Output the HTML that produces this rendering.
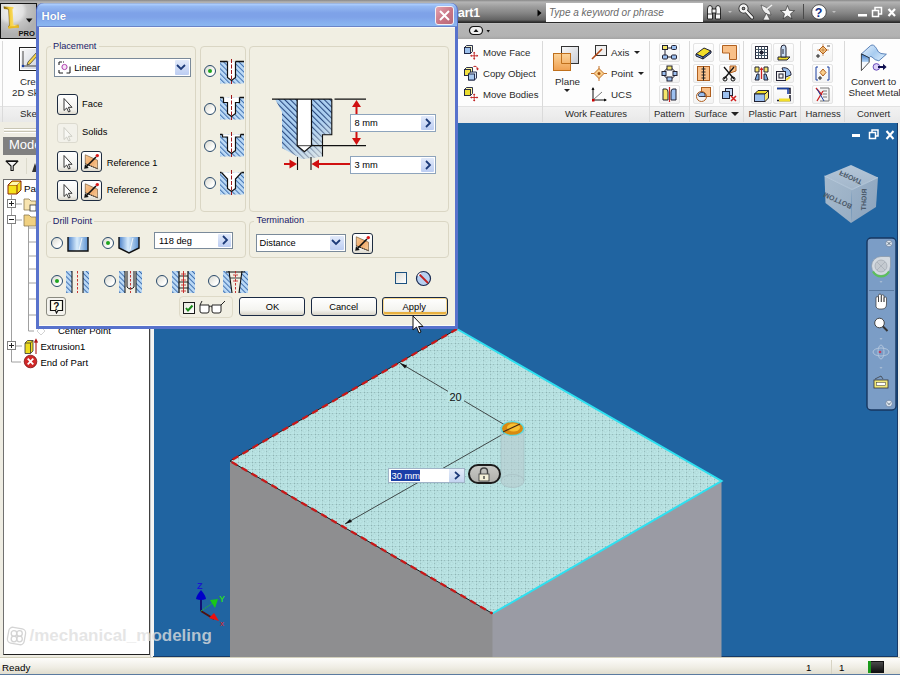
<!DOCTYPE html>
<html><head><meta charset="utf-8"><style>
*{margin:0;padding:0;box-sizing:border-box}
html,body{width:900px;height:675px;overflow:hidden;background:#2064a1;font-family:"Liberation Sans",sans-serif;font-size:11px;color:#000}
.a{position:absolute}
.t{position:absolute;white-space:nowrap;line-height:normal}
.sep{position:absolute;top:41px;width:1px;height:81px;background:#dadada}
.grp{position:absolute;border:1px solid #dad6c4;border-radius:4px}
.gl{position:absolute;background:#f1efe3;white-space:nowrap}
.btn{position:absolute;border:1px solid #1e2c40;border-radius:3px;background:linear-gradient(#ffffff,#f0efea 80%,#dcd8cc)}
.radio{position:absolute;width:12px;height:12px;border:1px solid #2a4a6a;border-radius:50%;background:linear-gradient(135deg,#d8d8d0,#fdfdfb 70%)}
.radio.on::after{content:"";position:absolute;left:3px;top:3px;width:4px;height:4px;border-radius:50%;background:#1fa51f}
.inp{position:absolute;background:#fff;border:1px solid #8a9aaa}
.spin{position:absolute;right:1px;top:1px;bottom:1px;width:13px;background:linear-gradient(#e2eafa,#bccdf2);border-radius:1px}
.pb{position:absolute;height:19px;border:1px solid #1a2a44;border-radius:3px;background:linear-gradient(#fff,#f4f4f0 70%,#d8d4c8)}
</style></head><body>
<div class="a" style="left:0px;top:0px;width:900px;height:23px;background:linear-gradient(#888 0,#a8a8a8 1.5px,#b2b2b2 2.5px,#9c9c9c 7px,#858585 13px,#626262 20px,#3a3a3a 21.5px,#222 23px)"></div>
<div class="a" style="left:0px;top:23px;width:900px;height:16px;background:linear-gradient(#c4c4c4 0,#b6b6b6 1.5px,#b2b2b2 13px,#a4a4a4 16px)"></div>
<div class="a" style="left:0px;top:39px;width:900px;height:67px;background:#fdfdfd"></div>
<div class="a" style="left:0px;top:106px;width:900px;height:17px;background:linear-gradient(#f2f2f2,#e8e8e8);border-top:1px solid #e2e2e2"></div>
<div class="a" style="left:0px;top:3px;width:37px;height:36px;background:#151515"></div>
<div class="a" style="left:1px;top:4px;width:34.5px;height:34px;background:radial-gradient(ellipse 75% 70% at 30% 20%,#f2f2f2 0,#e0e0e0 45%,#c4c4c4 60%,#b0b0b0 100%)"></div>
<svg class="a" style="left:1px;top:4px;" width="35" height="34" viewBox="0 0 35 34"><defs><linearGradient id="gI" x1="0" y1="0" x2="1" y2="0"><stop offset="0" stop-color="#8a6a10"/><stop offset="0.35" stop-color="#f0c830"/><stop offset="0.7" stop-color="#fce070"/><stop offset="1" stop-color="#c89818"/></linearGradient></defs>
<path d="M2.5 2.5 L12.5 3 L12.5 4.5 L11.5 5 L12.5 21 L17.5 20.5 L18 23.5 L7.5 24.5 L7 22.5 L8.5 21.5 L7.5 5.5 L3 5 Z" fill="url(#gI)"/>
<path d="M7 22.5 L7.5 24.5 L18 23.5 L17.5 22 Z" fill="#e8b820"/>
<path d="M3 3 L7.5 5.5 L8.5 21.5 L7 22.5" stroke="#5a4008" stroke-width="0.8" fill="none" opacity="0.6"/>
<path d="M25 14.5 L31.5 14.5 L28.2 18.5 Z" fill="#111"/>
<text x="17.5" y="32" font-family="Liberation Sans" font-weight="bold" font-size="7.6" fill="#111">PRO</text></svg>
<div class="t" style="left:450px;top:5.76px;font-size:12.2px;color:#fff;font-weight:bold;letter-spacing:-0.1px;">Part1</div>
<svg class="a" style="left:536px;top:8px;" width="6" height="10" viewBox="0 0 6 10"><path d="M1.5 1.5 L5.5 5 L1.5 8.5 Z" fill="#000"/></svg>
<div class="a" style="left:546px;top:3px;width:157px;height:19px;background:#fff"></div>
<div class="t" style="left:549px;top:6.79px;font-size:10px;color:#6a6a6a;font-style:italic;">Type a keyword or phrase</div>
<svg class="a" style="left:700px;top:0px;" width="200" height="23" viewBox="0 0 200 23">
 <g fill="#f6f6f6" stroke="#1a1a1a" stroke-width="0.9">
  <path d="M7.5 9 Q7.5 5.5 10 5.5 Q12.5 5.5 12.5 9 V19 H7.5 Z"/><path d="M15.5 9 Q15.5 5.5 18 5.5 Q20.5 5.5 20.5 9 V19 H15.5 Z"/><rect x="12" y="9" width="4" height="4"/>
 </g><path d="M7.5 14 H12.5 M15.5 14 H20.5" stroke="#1a1a1a" stroke-width="0.8"/>
 <path d="M28 11 L32 11 L30 13 Z" fill="#c0c0c0"/>
 <g stroke="#222" stroke-width="4" fill="none" stroke-linecap="round"><circle cx="43.5" cy="8.5" r="3"/><path d="M46 11 L52 17.5"/></g>
 <g stroke="#f4f4f4" stroke-width="2.4" fill="none" stroke-linecap="round"><circle cx="43.5" cy="8.5" r="3"/><path d="M46 11 L52 17.5"/></g>
 <g fill="#f0f0f0" stroke="#222" stroke-width="0.5"><path d="M61 5 Q70 8 71 15 Q63 15 61 5 Z"/><path d="M63 20 L66.5 13 L70 20 Z"/><path d="M67 9 L72 5" stroke="#f0f0f0" stroke-width="1.4"/></g>
 <path d="M87.5 5.5 L89.4 10.4 L94.5 10.6 L90.5 13.8 L91.9 18.8 L87.5 15.9 L83.1 18.8 L84.5 13.8 L80.5 10.6 L85.6 10.4 Z" fill="#f8f8f8" stroke="#222" stroke-width="0.6"/>
 <rect x="103" y="4" width="1" height="15" fill="#4a4a4a"/>
 <circle cx="119" cy="12" r="7.3" fill="#fff" stroke="#222" stroke-width="0.7"/>
 <text x="114.8" y="16.6" font-family="Liberation Sans" font-weight="bold" font-size="12.5" fill="#10308a">?</text>
 <path d="M132 11 L136 11 L134 13 Z" fill="#c0c0c0"/>
 <rect x="158" y="14" width="9" height="2.5" fill="#fff"/>
 <g fill="none" stroke="#fff" stroke-width="1.5"><rect x="172.5" y="10.5" width="6" height="6"/><path d="M175 10 L175 7.5 L181.5 7.5 L181.5 14 L179 14"/></g>
 <path d="M188.5 9 L195 16 M195 9 L188.5 16" stroke="#fff" stroke-width="2.2"/></svg>
<svg class="a" style="left:468px;top:25px;" width="24" height="12" viewBox="0 0 24 12"><rect x="1.5" y="1.5" width="13" height="8" rx="4" fill="#f0f0f0" stroke="#111" stroke-width="1.2"/><path d="M5.5 7 L10.5 7 L8 4 Z" fill="#111"/><path d="M18.5 5 L22 5 L20.2 7.5 Z" fill="#111"/></svg>
<div class="sep" style="left:2px"></div><svg class="a" style="left:19px;top:47px;" width="20" height="24" viewBox="0 0 20 24"><defs><linearGradient id="skg" x1="0" y1="0" x2="1" y2="1"><stop offset="0" stop-color="#f8f8f8"/><stop offset="1" stop-color="#d0d6e0"/></linearGradient></defs><rect x="0.5" y="0.5" width="19" height="23" fill="#fff" stroke="#222"/><rect x="2" y="2" width="16" height="20" fill="url(#skg)"/><path d="M4 4 V19 H17" stroke="#444" fill="none" stroke-width="1"/><circle cx="4" cy="19" r="1.3" fill="#1a3fa0"/><path d="M9 15 L17 6 L19 8 L11 17 L8 18 Z" fill="#f4d24a" stroke="#333" stroke-width="0.7"/></svg>
<div class="t" style="left:20px;top:75.77px;font-size:9.8px;color:#2a2a2a;">Create</div>
<div class="t" style="left:12px;top:86.87px;font-size:9.8px;color:#2a2a2a;">2D Sketch</div>
<div class="t" style="left:20px;top:107.67px;font-size:9.8px;color:#2a2a2a;">Sketch</div>
<svg class="a" style="left:463px;top:44px;" width="18" height="18" viewBox="0 0 18 18"><path d="M1.5 3.5 L3.5 1.5 H9.5 V7.5 L7.5 9.5 H1.5 Z" fill="#f0f0d0" stroke="#1a2040" stroke-width="0.9"/><rect x="1.5" y="3.5" width="6" height="6" fill="#9cc0ec" stroke="#1a2040" stroke-width="0.9"/><path d="M7.699999999999999 11.8 H14.7 M11.2 8.3 V15.3" stroke="#c02020" stroke-width="0.9"/><path d="M7.199999999999999 11.8 l1.5 -1.2 v2.4 Z M15.2 11.8 l-1.5 -1.2 v2.4 Z M11.2 7.800000000000001 l-1.2 1.5 h2.4 Z M11.2 15.8 l-1.2 -1.5 h2.4 Z" fill="#c02020"/></svg>
<div class="t" style="left:483px;top:47.16px;font-size:9.6px;color:#2a2a2a;">Move Face</div>
<svg class="a" style="left:463px;top:65px;" width="18" height="18" viewBox="0 0 18 18"><path d="M1.5 4.5 L3.5 2.5 H9.5 V8.5 L7.5 10.5 H1.5 Z" fill="#fff8a0" stroke="#1a2040" stroke-width="0.9"/><rect x="1.5" y="4.5" width="6" height="6" fill="#f2e040" stroke="#1a2040" stroke-width="0.9"/><path d="M10.5 1.5 Q14 0.5 14.5 4" stroke="#c02020" fill="none" stroke-width="1"/><path d="M13 3.5 L14.5 5.5 L16 3.5 Z" fill="#c02020"/><path d="M5.5 9 L7.5 7 H13.5 V13 L11.5 15 H5.5 Z" fill="#d8e8f8" stroke="#1a2040" stroke-width="0.9"/><rect x="5.5" y="9" width="6" height="6" fill="#a8c8f0" stroke="#1a2040" stroke-width="0.9"/></svg>
<div class="t" style="left:483px;top:68.46px;font-size:9.6px;color:#2a2a2a;">Copy Object</div>
<svg class="a" style="left:463px;top:86px;" width="18" height="18" viewBox="0 0 18 18"><path d="M1.5 3.5 L3.5 1.5 H9.5 V7.5 L7.5 9.5 H1.5 Z" fill="#fff8a0" stroke="#1a2040" stroke-width="0.9"/><rect x="1.5" y="3.5" width="6" height="6" fill="#eadc30" stroke="#1a2040" stroke-width="0.9"/><path d="M7.699999999999999 11.5 H14.7 M11.2 8.0 V15.0" stroke="#c02020" stroke-width="0.9"/><path d="M7.199999999999999 11.5 l1.5 -1.2 v2.4 Z M15.2 11.5 l-1.5 -1.2 v2.4 Z M11.2 7.5 l-1.2 1.5 h2.4 Z M11.2 15.5 l-1.2 -1.5 h2.4 Z" fill="#c02020"/></svg>
<div class="t" style="left:483px;top:89.16px;font-size:9.6px;color:#2a2a2a;">Move Bodies</div>
<div class="sep" style="left:542px"></div><svg class="a" style="left:552px;top:45px;" width="30" height="28" viewBox="0 0 30 28"><defs><linearGradient id="pg1" x1="0" y1="0" x2="1" y2="1"><stop offset="0" stop-color="#fafafa"/><stop offset="1" stop-color="#c8ccd4"/></linearGradient><linearGradient id="pg2" x1="0" y1="0" x2="0" y2="1"><stop offset="0" stop-color="#fcd49a"/><stop offset="1" stop-color="#f0a050"/></linearGradient></defs><rect x="9.5" y="1.5" width="17" height="17" fill="url(#pg1)" stroke="#333"/><rect x="1.5" y="8.5" width="17" height="17" fill="url(#pg2)" stroke="#c0701c"/><path d="M9.5 8.5 V18.5 H18.5" stroke="#c0701c" fill="none"/></svg>
<div class="t" style="left:555px;top:76.27px;font-size:9.8px;color:#2a2a2a;">Plane</div>
<svg class="a" style="left:564px;top:89px;" width="6" height="4" viewBox="0 0 6 4"><path d="M0 0 L6 0 L3 3 Z" fill="#222"/></svg>
<svg class="a" style="left:591px;top:45px;" width="17" height="15" viewBox="0 0 17 15"><rect x="4.5" y="0.5" width="11" height="10" fill="#f0f0f0" stroke="#333"/><path d="M1 14 L11 4" stroke="#b04818" stroke-width="1.6"/></svg>
<div class="t" style="left:611px;top:46.97px;font-size:9.8px;color:#2a2a2a;">Axis</div>
<svg class="a" style="left:634px;top:51px;" width="6" height="4" viewBox="0 0 6 4"><path d="M0 0 L6 0 L3 3 Z" fill="#222"/></svg>
<svg class="a" style="left:591px;top:66px;" width="17" height="15" viewBox="0 0 17 15"><path d="M8 0 V15 M0 7.5 H16" stroke="#c07028" stroke-width="1"/><path d="M8 2.5 L13 7.5 L8 12.5 L3 7.5 Z" fill="#fbd08c" stroke="#c07028"/><circle cx="8" cy="7.5" r="1.5" fill="#a05010"/></svg>
<div class="t" style="left:611px;top:67.67px;font-size:9.8px;color:#2a2a2a;">Point</div>
<svg class="a" style="left:638px;top:72px;" width="6" height="4" viewBox="0 0 6 4"><path d="M0 0 L6 0 L3 3 Z" fill="#222"/></svg>
<svg class="a" style="left:591px;top:87px;" width="17" height="15" viewBox="0 0 17 15"><path d="M2 1 V13 H15" stroke="#111" stroke-width="1" fill="none"/><path d="M2 13 L11 5" stroke="#555" stroke-width="0.8"/><path d="M0.5 3 L2 0 L3.5 3 Z M13 11.5 L16 13 L13 14.5 Z" fill="#111"/><rect x="1" y="12" width="2.5" height="2.5" fill="#c00"/></svg>
<div class="t" style="left:611px;top:88.97px;font-size:9.8px;color:#2a2a2a;">UCS</div>
<div class="t" style="left:565px;top:107.95px;font-size:9.5px;color:#2a2a2a;">Work Features</div>
<div class="sep" style="left:649px"></div><div class="a" style="left:659px;top:43px;width:21px;height:19px;border:1px solid #e4e4e4;border-radius:2px;background:linear-gradient(#fefefe,#f3f3f3)"></div>
<svg class="a" style="left:661px;top:44px;" width="17" height="17" viewBox="0 0 17 17"><path d="M4 4 H13 M4 4 V13 H13" stroke="#223" fill="none"/><rect x="1.5" y="1.5" width="5" height="4" fill="#f5e66a" stroke="#223"/><rect x="10.5" y="1.5" width="5" height="4" rx="1" fill="#9cc0f0" stroke="#223"/><rect x="1.5" y="11" width="5" height="4" rx="1" fill="#9cc0f0" stroke="#223"/><rect x="10.5" y="11" width="5" height="4" rx="1" fill="#9cc0f0" stroke="#223"/></svg>
<div class="a" style="left:659px;top:64px;width:21px;height:19px;border:1px solid #e4e4e4;border-radius:2px;background:linear-gradient(#fefefe,#f3f3f3)"></div>
<svg class="a" style="left:661px;top:65px;" width="17" height="17" viewBox="0 0 17 17"><circle cx="8.5" cy="8.5" r="5.5" fill="none" stroke="#223"/><rect x="6" y="1" width="5" height="4" fill="#f5e66a" stroke="#223"/><rect x="1" y="6.5" width="4" height="4" fill="#9cc0f0" stroke="#223"/><rect x="12" y="6.5" width="4" height="4" fill="#9cc0f0" stroke="#223"/><rect x="6" y="12" width="5" height="4" fill="#9cc0f0" stroke="#223"/></svg>
<div class="a" style="left:659px;top:85px;width:21px;height:19px;border:1px solid #e4e4e4;border-radius:2px;background:linear-gradient(#fefefe,#f3f3f3)"></div>
<svg class="a" style="left:661px;top:86px;" width="17" height="17" viewBox="0 0 17 17"><path d="M2 3 H5 Q7 3 7 6 V14 H2 Z" fill="#f5e66a" stroke="#223"/><path d="M15 3 H12 Q10 3 10 6 V14 H15 Z" fill="#9cc0f0" stroke="#223"/><path d="M8.5 1 V16" stroke="#c22" stroke-width="1.2"/></svg>
<div class="sep" style="left:689px"></div><div class="a" style="left:693px;top:43px;width:21px;height:19px;border:1px solid #e4e4e4;border-radius:2px;background:linear-gradient(#fefefe,#f3f3f3)"></div>
<svg class="a" style="left:695px;top:44px;" width="17" height="17" viewBox="0 0 17 17"><path d="M1 10 L9 4 L16 7 L8 13 Z" fill="#f2de2a" stroke="#223"/><path d="M1 10 V12 L8 15 V13 Z" fill="#7aa8e0" stroke="#223"/><path d="M8 13 V15 L16 9 V7 Z" fill="#4f7fc0" stroke="#223"/></svg>
<div class="a" style="left:719px;top:43px;width:21px;height:19px;border:1px solid #e4e4e4;border-radius:2px;background:linear-gradient(#fefefe,#f3f3f3)"></div>
<svg class="a" style="left:721px;top:44px;" width="17" height="17" viewBox="0 0 17 17"><path d="M1.5 1.5 H15.5 V15.5 H8.5 V9 H1.5 Z" fill="#f9c088" stroke="#b06020"/></svg>
<div class="a" style="left:693px;top:64px;width:21px;height:19px;border:1px solid #e4e4e4;border-radius:2px;background:linear-gradient(#fefefe,#f3f3f3)"></div>
<svg class="a" style="left:695px;top:65px;" width="17" height="17" viewBox="0 0 17 17"><rect x="2.5" y="1.5" width="12" height="14" fill="#f9c088" stroke="#b06020"/><path d="M8.5 1.5 V15.5 M6.5 4 H10.5 M6.5 7 H10.5 M6.5 10 H10.5 M6.5 13 H10.5" stroke="#222"/></svg>
<div class="a" style="left:719px;top:64px;width:21px;height:19px;border:1px solid #e4e4e4;border-radius:2px;background:linear-gradient(#fefefe,#f3f3f3)"></div>
<svg class="a" style="left:721px;top:65px;" width="17" height="17" viewBox="0 0 17 17"><path d="M9 1 H15 V6 L9 8 Z" fill="#f9c088" stroke="#b06020"/><path d="M3 2 L13 14 M13 2 L3 14" stroke="#111" stroke-width="1.3"/><circle cx="4" cy="14" r="2" fill="none" stroke="#111"/><circle cx="12" cy="14" r="2" fill="none" stroke="#111"/></svg>
<div class="a" style="left:693px;top:85px;width:21px;height:19px;border:1px solid #e4e4e4;border-radius:2px;background:linear-gradient(#fefefe,#f3f3f3)"></div>
<svg class="a" style="left:695px;top:86px;" width="17" height="17" viewBox="0 0 17 17"><rect x="6.5" y="1.5" width="9" height="9" fill="#f9c088" stroke="#b06020"/><circle cx="6.5" cy="10.5" r="5" fill="none" stroke="#b06020"/><path d="M3 9 A4 4 0 0 1 10 8 V10.5 H4 Z" fill="#9cc0f0" stroke="#223" stroke-width="0.8"/></svg>
<div class="a" style="left:719px;top:85px;width:21px;height:19px;border:1px solid #e4e4e4;border-radius:2px;background:linear-gradient(#fefefe,#f3f3f3)"></div>
<svg class="a" style="left:721px;top:86px;" width="17" height="17" viewBox="0 0 17 17"><rect x="4.5" y="2.5" width="7" height="7" fill="#c8dcf4" stroke="#223"/><rect x="1.5" y="5.5" width="7" height="7" fill="#9cc0f0" stroke="#223"/><path d="M10 10 L15 15 M15 10 L10 15" stroke="#d02020" stroke-width="1.5"/></svg>
<div class="sep" style="left:743px"></div><div class="a" style="left:751px;top:43px;width:21px;height:19px;border:1px solid #e4e4e4;border-radius:2px;background:linear-gradient(#fefefe,#f3f3f3)"></div>
<svg class="a" style="left:753px;top:44px;" width="17" height="17" viewBox="0 0 17 17"><rect x="2.5" y="2.5" width="12" height="12" fill="#fff" stroke="#223"/><path d="M5.5 2.5 V14.5 M8.5 2.5 V14.5 M11.5 2.5 V14.5 M2.5 5.5 H14.5 M2.5 8.5 H14.5 M2.5 11.5 H14.5" stroke="#456"/><circle cx="8.5" cy="8.5" r="2" fill="#223"/></svg>
<div class="a" style="left:773px;top:43px;width:21px;height:19px;border:1px solid #e4e4e4;border-radius:2px;background:linear-gradient(#fefefe,#f3f3f3)"></div>
<svg class="a" style="left:775px;top:44px;" width="17" height="17" viewBox="0 0 17 17"><path d="M3 13 H15 L12 16 H3 Z" fill="#f2de2a" stroke="#223"/><path d="M6 13 V4 Q6 1 9 1 Q11 1 11 4 V13 Z" fill="#c8dcf4" stroke="#223"/><path d="M8 5 V10" stroke="#223"/></svg>
<div class="a" style="left:751px;top:64px;width:21px;height:19px;border:1px solid #e4e4e4;border-radius:2px;background:linear-gradient(#fefefe,#f3f3f3)"></div>
<svg class="a" style="left:753px;top:65px;" width="17" height="17" viewBox="0 0 17 17"><path d="M2 2 H6 V7 H2 Z M11 2 H15 V7 H11 Z" fill="#f5e66a" stroke="#223"/><path d="M2 15 L4 9 H6 V15 Z M11 15 V9 H13 L15 15 Z" fill="#7aa8e0" stroke="#223"/><path d="M8.5 3 V14" stroke="#c22" stroke-width="1.3"/><path d="M6.5 5 L8.5 2 L10.5 5" fill="#c22"/></svg>
<div class="a" style="left:773px;top:64px;width:21px;height:19px;border:1px solid #e4e4e4;border-radius:2px;background:linear-gradient(#fefefe,#f3f3f3)"></div>
<svg class="a" style="left:775px;top:65px;" width="17" height="17" viewBox="0 0 17 17"><path d="M7 3 A7 7 0 0 1 16 10 L11 12 Z" fill="#9cc0f0" stroke="#223"/><rect x="1.5" y="6.5" width="9" height="9" fill="#f4f4f4" stroke="#223"/><rect x="4" y="9" width="4" height="4" fill="none" stroke="#223"/><path d="M11 15 L15 12" stroke="#f2de2a" stroke-width="2"/></svg>
<div class="a" style="left:751px;top:85px;width:21px;height:19px;border:1px solid #e4e4e4;border-radius:2px;background:linear-gradient(#fefefe,#f3f3f3)"></div>
<svg class="a" style="left:753px;top:86px;" width="17" height="17" viewBox="0 0 17 17"><path d="M1.5 8 L5 4.5 H15.5 L12 8 Z" fill="#f2de2a" stroke="#223"/><rect x="1.5" y="8" width="10.5" height="7.5" fill="#9cc0f0" stroke="#223"/><path d="M12 8 L15.5 4.5 V12 L12 15.5" fill="#f5e66a" stroke="#223"/></svg>
<div class="a" style="left:773px;top:85px;width:21px;height:19px;border:1px solid #e4e4e4;border-radius:2px;background:linear-gradient(#fefefe,#f3f3f3)"></div>
<svg class="a" style="left:775px;top:86px;" width="17" height="17" viewBox="0 0 17 17"><path d="M2 2.5 H15 V8 M2 14.5 H15 V9" stroke="#223" stroke-width="1.6" fill="none"/><rect x="4" y="12.5" width="11" height="3" fill="#f2de2a"/><path d="M2 2.5 H13 V8" stroke="#1a3fa0" stroke-width="1.6" fill="none"/></svg>
<div class="sep" style="left:800px"></div><div class="a" style="left:812px;top:43px;width:21px;height:19px;border:1px solid #e4e4e4;border-radius:2px;background:linear-gradient(#fefefe,#f3f3f3)"></div>
<svg class="a" style="left:814px;top:44px;" width="17" height="17" viewBox="0 0 17 17"><path d="M9 2 L13 6 L9 10 L5 6 Z" fill="#fbd08c" stroke="#b06020"/><path d="M9 0 V12 M3 6 H15" stroke="#b06020" stroke-width="0.6"/><path d="M2 12 H6 M4 10 V14" stroke="#222"/><path d="M13 2 H16" stroke="#222" stroke-width="0.8"/></svg>
<div class="a" style="left:812px;top:64px;width:21px;height:19px;border:1px solid #e4e4e4;border-radius:2px;background:linear-gradient(#fefefe,#f3f3f3)"></div>
<svg class="a" style="left:814px;top:65px;" width="17" height="17" viewBox="0 0 17 17"><path d="M4 2 H2 V15 H4 M13 2 H15 V15 H13" stroke="#1a3fa0" fill="none"/><path d="M9 4 L12 7.5 L9 11 L6 7.5 Z" fill="#fbd08c" stroke="#b06020"/><path d="M4 13 H8 M6 11 V15" stroke="#222"/></svg>
<div class="a" style="left:812px;top:85px;width:21px;height:19px;border:1px solid #e4e4e4;border-radius:2px;background:linear-gradient(#fefefe,#f3f3f3)"></div>
<svg class="a" style="left:814px;top:86px;" width="17" height="17" viewBox="0 0 17 17"><path d="M6 2 H15 V15 H6" fill="#f4f4f4" stroke="#777"/><path d="M9 5 H13 M9 8 H13 M9 11 H13" stroke="#777"/><path d="M2 2 L8 9 M9 5 L3 15" stroke="#c22" stroke-width="1.3"/><path d="M3 3 L10 15" stroke="#1a3fa0" stroke-width="1"/></svg>
<div class="sep" style="left:844px"></div><svg class="a" style="left:858px;top:44px;" width="32" height="28" viewBox="0 0 32 28"><defs><linearGradient id="cvg" x1="0" y1="0" x2="1" y2="0.6"><stop offset="0" stop-color="#eef6fe"/><stop offset="0.6" stop-color="#a8ccf0"/><stop offset="1" stop-color="#d0e6fa"/></linearGradient><linearGradient id="cvf" x1="0" y1="0" x2="0" y2="1"><stop offset="0" stop-color="#3a78c8"/><stop offset="0.45" stop-color="#a8ccf0"/><stop offset="0.5" stop-color="#f4f8fc"/><stop offset="1" stop-color="#ffffff"/></linearGradient></defs><path d="M3.4 9.9 L12.6 1.6 Q15.5 -0.5 18.5 4.5 Q20 8.8 23 9.5 L28.4 10.2 L20.9 16.8 Q17 16.5 14 13 Q12.5 11.5 11.2 13.8 Z" fill="url(#cvg)" stroke="#3a68a8" stroke-width="0.8"/><path d="M3.4 9.9 L11.2 13.8 L11.2 18.2 L3.4 26.6 Z" fill="url(#cvf)" stroke="#222" stroke-width="0.8"/><circle cx="18.4" cy="22.9" r="3.3" fill="#dcd0f8" stroke="#5a3ab0" stroke-width="0.9"/><path d="M20 23 H26" stroke="#101050" stroke-width="2"/><path d="M25 19.8 L28.6 23 L25 26.2 Z" fill="#101050"/></svg>
<div class="t" style="left:851px;top:75.87px;font-size:9.8px;color:#2a2a2a;">Convert to</div>
<div class="t" style="left:848.5px;top:87.37px;font-size:9.8px;color:#2a2a2a;">Sheet Metal</div>
<div class="t" style="left:654px;top:107.95px;font-size:9.5px;color:#2a2a2a;">Pattern</div>
<div class="t" style="left:694.5px;top:107.95px;font-size:9.5px;color:#2a2a2a;">Surface</div>
<svg class="a" style="left:731px;top:112px;" width="8" height="5" viewBox="0 0 8 5"><path d="M0 0 L8 0 L4 4 Z" fill="#222"/></svg>
<div class="t" style="left:748.5px;top:107.95px;font-size:9.5px;color:#2a2a2a;">Plastic Part</div>
<div class="t" style="left:805.5px;top:107.95px;font-size:9.5px;color:#2a2a2a;">Harness</div>
<div class="t" style="left:857px;top:107.95px;font-size:9.5px;color:#2a2a2a;">Convert</div>
<div class="a" style="left:0px;top:122px;width:153px;height:535px;background:#efede3"></div>
<div class="a" style="left:154px;top:123px;width:744px;height:534px;background:#2064a1"></div>
<div class="a" style="left:150px;top:122px;width:4px;height:535px;background:#f4f4f2;border-left:1px solid #c8c8c8"></div>
<div class="a" style="left:898px;top:123px;width:2px;height:534px;background:#f2f2ee"></div>
<div class="a" style="left:897px;top:123px;width:1px;height:534px;background:#163a68"></div>
<div class="a" style="left:153px;top:656px;width:745px;height:1px;background:#163a68"></div>
<div class="a" style="left:3px;top:179px;width:147px;height:476px;background:#fff;border:1px solid #707070;border-right-color:#404040;border-bottom-color:#202020"></div>
<div class="a" style="left:4px;top:128px;width:145px;height:1px;background:#c8c5b4"></div>
<div class="a" style="left:4px;top:129px;width:145px;height:1px;background:#fff"></div>
<div class="a" style="left:4px;top:131px;width:145px;height:1px;background:#c8c5b4"></div>
<div class="a" style="left:4px;top:132px;width:145px;height:1px;background:#fff"></div>
<div class="a" style="left:3px;top:137px;width:80px;height:18px;background:#808080"></div>
<div class="t" style="left:9px;top:137.33px;font-size:13px;color:#fff;">Model</div>
<svg class="a" style="left:5px;top:160px;" width="14" height="12" viewBox="0 0 14 12"><path d="M1 1.2 H13 L8.2 6 V10.5 L6 10.5 V6 Z" fill="#f4f4f4" stroke="#111" stroke-width="1.1" stroke-linejoin="round"/><path d="M1 1.2 H13" stroke="#111" stroke-width="1.6"/></svg>
<div class="a" style="left:26px;top:158px;width:1px;height:16px;background:#dcdacc"></div>
<svg class="a" style="left:31px;top:160px;" width="8" height="13" viewBox="0 0 8 13"><path d="M1 12 L4 3 L7 12 Z" fill="#333"/></svg>
<svg class="a" style="left:4px;top:180px;" width="145" height="190" viewBox="0 0 145 190">
 <g stroke="#a0a0a0" stroke-width="1" fill="none">
  <path d="M7.5 15 V182 H17"/>
  <path d="M11 24 H18 M11 40 H18 M11 166 H18"/>
  <path d="M24.5 45 V151 H30"/>
  <path d="M24.5 48 H32 M24.5 62 H32 M24.5 76 H32 M24.5 89 H32 M24.5 103 H32 M24.5 119 H32 M24.5 135 H32"/>
 </g>
 <g fill="#fff" stroke="#808080"><rect x="3.5" y="19.5" width="8" height="8"/><rect x="3.5" y="35.5" width="8" height="8"/><rect x="3.5" y="161.5" width="8" height="8"/></g>
 <path d="M5 23.5 H10 M7.5 21 V26 M5 39.5 H10 M5 165.5 H10 M7.5 163 V168" stroke="#222"/>
 <path d="M4 5 L8 1 L17 1 L17 10 L13 14 L4 14 Z" fill="#f6e21a" stroke="#8a2a0a" stroke-width="1"/>
 <path d="M4 5 H13 V14 M13 5 L17 1" stroke="#8a2a0a" fill="none" stroke-width="1"/>
 <path d="M5 5 L8.5 2 H16 L13 5 Z" fill="#fff8b0"/>
 <path d="M20 19 H25 L27 21 H32 V30 H20 Z" fill="#f8e4b0" stroke="#8a7a50" stroke-width="0.8"/>
 <rect x="26" y="25" width="6" height="6" fill="#fff" stroke="#333" stroke-width="0.8"/>
 <path d="M20 35 H25 L27 37 H32 V46 H20 Z" fill="#f0d080" stroke="#8a7a50" stroke-width="0.8"/>
 <path d="M21 163 L23.5 160.5 H29 V171 L26.5 173.5 H21 Z" fill="#eedc20" stroke="#333" stroke-width="0.8"/>
 <path d="M21 163 H26.5 V173.5 M26.5 163 L29 160.5" stroke="#333" fill="none" stroke-width="0.8"/>
 <path d="M32 174 V160 M30.5 162.5 L32 159.5 L33.5 162.5" stroke="#b01818" stroke-width="1.1" fill="#b01818"/>
 <circle cx="26.5" cy="181.5" r="6.3" fill="#d02828" stroke="#801010" stroke-width="0.8"/>
 <path d="M23.7 178.7 L29.3 184.3 M29.3 178.7 L23.7 184.3" stroke="#fff" stroke-width="1.8"/>
 <path d="M37 147 L41 151 L37 155 L33 151 Z" fill="none" stroke="#c8c8c8" stroke-width="0.8"/></svg>
<div class="t" style="left:24px;top:182.97px;font-size:9.8px;color:#000;">Part1</div>
<div class="t" style="left:58px;top:325.45px;font-size:9.5px;color:#000;">Center Point</div>
<div class="t" style="left:40.5px;top:341.25px;font-size:9.5px;color:#000;">Extrusion1</div>
<div class="t" style="left:40.5px;top:356.55px;font-size:9.5px;color:#000;">End of Part</div>
<div class="a" style="left:0px;top:657px;width:900px;height:18px;background:linear-gradient(#fdfdfb,#efede4 55%,#dedbcb);border-top:1px solid #d4d1bd"></div>
<div class="a" style="left:0px;top:674px;width:900px;height:1px;background:#5a7aa0"></div>
<div class="t" style="left:2px;top:661.67px;font-size:9.8px;color:#000;">Ready</div>
<div class="t" style="left:806px;top:661.67px;font-size:9.8px;color:#000;">1</div>
<div class="a" style="left:831px;top:660px;width:1px;height:14px;background:#d8d4c4"></div>
<div class="t" style="left:839px;top:661.67px;font-size:9.8px;color:#000;">1</div>
<div class="a" style="left:868px;top:661px;width:16px;height:12px;background:linear-gradient(#4a4a4a,#111);border:1px solid #111"></div>
<div class="a" style="left:868px;top:661px;width:3px;height:12px;background:#1a9a1a"></div>
<svg class="a" style="left:153px;top:123px;" width="745" height="534" viewBox="153 123 745 534">
 <defs>
  <pattern id="dots" patternUnits="userSpaceOnUse" width="7" height="7" x="0" y="0">
   <rect width="7" height="7" fill="#bbe5e5"/>
   <rect x="0" y="0" width="1" height="1" fill="#8cb4b4"/><rect x="0" y="3" width="1" height="1" fill="#94bcbc"/><rect x="3" y="0" width="1" height="1" fill="#94bcbc"/>
   <rect x="0" y="1" width="1" height="2" fill="#b0d8d8"/><rect x="0" y="4" width="1" height="3" fill="#b0d8d8"/><rect x="1" y="0" width="2" height="1" fill="#b0d8d8"/><rect x="4" y="0" width="3" height="1" fill="#b0d8d8"/>
   <circle cx="3.5" cy="3.5" r="1.8" fill="none" stroke="#acd6d6" stroke-width="0.8"/>
  </pattern>
 </defs>
 <polygon points="230,461 494,614.4 494,657 230,657" fill="#8e8e90"/>
 <polygon points="492.5,613.5 721.5,481 721.5,657 492.5,657" fill="#9a9ba4"/>
 <polygon points="457,329 721.5,481 492.5,613.5 230,461" fill="url(#dots)"/>
 <path d="M457 329 L721.5 481 L492.5 613.5" stroke="#2ee0f0" stroke-width="2" fill="none"/>
 <path d="M457 329 L230 461 L492.5 613.5" stroke="#1a1a1a" stroke-width="1" fill="none"/>
 <path d="M457 329 L230 461 L492.5 613.5" stroke="#c81818" stroke-width="2.3" fill="none" stroke-dasharray="6.5 5"/>
 <path d="M400 363 L505 425" stroke="#222" stroke-width="0.8"/>
 <path d="M400 363 L407 365.5 L405 368.5 Z" fill="#111"/>
 <rect x="448" y="390" width="16" height="12" fill="#b8e4e4"/>
 <text x="449.5" y="401" font-family="Liberation Sans" font-size="11" fill="#111">20</text>
 <path d="M345 524 L505 433" stroke="#222" stroke-width="0.8"/>
 <path d="M345 524 L350 519 L352 522 Z" fill="#111"/>
 <path d="M501 428 V481 A11.5 6.5 0 0 0 524 481 V428 Z" fill="#b8cccf" fill-opacity="0.6"/>
 <ellipse cx="512.5" cy="481" rx="11.5" ry="6.5" fill="none" stroke="#a8c0c4" stroke-width="0.8"/>
 <path d="M501 428 V481 M524 428 V481" stroke="#9fb8bc" stroke-width="0.6"/>
 <ellipse cx="512.5" cy="428.5" rx="12" ry="7.5" fill="#48d8e0" opacity="0.8"/>
 <ellipse cx="512.5" cy="428.5" rx="10.5" ry="6.3" fill="#d88a10"/>
 <ellipse cx="513.5" cy="427.5" rx="6.5" ry="4" fill="#f8c030"/>
 <path d="M503 432 L520 424" stroke="#4a2a10" stroke-width="1.2"/>
 <path d="M201 611 V595" stroke="#101070" stroke-width="2"/>
 <path d="M201 611 L214 619" stroke="#501010" stroke-width="2"/>
 <path d="M201 611 L213 603" stroke="#20c020" stroke-width="1" stroke-dasharray="1.5 1"/>
 <path d="M196 599 Q196 596 201 590 Q206 596 206 599 Q201 601 196 599 Z" fill="#0000c8"/>
 <text x="197" y="589" font-family="Liberation Sans" font-weight="bold" font-size="9" fill="#1818d0">Z</text>
 <path d="M210 600 L218 599 L215 608 Z" fill="#18c818"/>
 <text x="219" y="602" font-family="Liberation Sans" font-weight="bold" font-size="9" fill="#28d828">Y</text>
 <path d="M209 618 L214 613 L219 621 Z" fill="#e81010"/>
 <text x="220" y="626" font-family="Liberation Sans" font-size="8" fill="#e02020">x</text>
 <defs><linearGradient id="cubeT" x1="0" y1="0" x2="0" y2="1"><stop offset="0" stop-color="#b4c6d8"/><stop offset="1" stop-color="#a2b6ca"/></linearGradient><linearGradient id="cubeL" x1="0" y1="0" x2="1" y2="1"><stop offset="0" stop-color="#a6bacd"/><stop offset="1" stop-color="#98aec4"/></linearGradient><linearGradient id="cubeR" x1="0" y1="0" x2="1" y2="1"><stop offset="0" stop-color="#9cb2c8"/><stop offset="1" stop-color="#8aa2bc"/></linearGradient></defs>
 <path d="M851 165 L878 177.5 L852 189.5 L824.5 176 Z" fill="url(#cubeT)"/>
 <path d="M824.5 176 L852 189.5 L851 223 L825.5 203 Z" fill="url(#cubeL)"/>
 <path d="M852 189.5 L878 177.5 L876 207 L851 223 Z" fill="url(#cubeR)"/>
 <path d="M824.5 176 L852 189.5 L878 177.5" stroke="#c4d2e0" stroke-width="0.8" fill="none"/>
 <text transform="translate(851,177) rotate(25) scale(1,-1)" text-anchor="middle" dominant-baseline="middle" font-family="Liberation Sans" font-size="7" fill="#4a5868" font-weight="bold">FRONT</text>
 <text transform="translate(838,200) rotate(205)" text-anchor="middle" dominant-baseline="middle" font-family="Liberation Sans" font-size="7" fill="#4a5868" font-weight="bold">BOTTOM</text>
 <text transform="translate(864.5,199.5) rotate(92) scale(1,-1)" text-anchor="middle" dominant-baseline="middle" font-family="Liberation Sans" font-size="7" fill="#4a5868" font-weight="bold">RIGHT</text>
 <rect x="852" y="134" width="8" height="3" fill="#fff"/>
 <rect x="869.5" y="132.5" width="6" height="6" fill="none" stroke="#fff" stroke-width="1.5"/>
 <path d="M872 132 V130 H878 V136 H876" fill="none" stroke="#fff" stroke-width="1.5"/>
 <path d="M886.5 131 L893.5 139 M893.5 131 L886.5 139" stroke="#fff" stroke-width="2"/>
 <rect x="867" y="238" width="29" height="172" rx="4" fill="#7b9dc6" stroke="#163660" stroke-width="1.4"/>
 <circle cx="889" cy="243.5" r="3.3" fill="#dde6f0" stroke="#5a7090" stroke-width="0.6"/>
 <path d="M887.3 241.8 L890.7 245.2 M890.7 241.8 L887.3 245.2" stroke="#456" stroke-width="0.8"/>
 <path d="M881 256.5 H889 Q890.5 256.5 890.5 258 V266 A9.5 9.5 0 1 1 881 256.5 Z" fill="#d4dae0" stroke="#8a9aac" stroke-width="0.8"/>
 <circle cx="881" cy="266" r="6" fill="#c4cad0" stroke="#a0a8b0" stroke-width="0.7"/>
 <path d="M877 262 L885 270 M885 262 L877 270" stroke="#a8b0b8" stroke-width="0.8"/>
 <path d="M873 271.5 A9 9 0 0 0 889 271.5" stroke="#5cc05c" stroke-width="2.2" fill="none"/>
 <path d="M879.5 281 L882.5 281 L881 283 Z" fill="#a8bcd4"/>
 <path d="M869 290.5 H894" stroke="#5a7aa0" stroke-width="1"/>
 <path d="M876 307 V298 Q876 296.5 877.3 296.5 Q878.5 296.5 878.5 298 V302 V295.5 Q878.5 294 880 294 Q881.3 294 881.3 295.5 V302 V296 Q881.3 294.8 882.6 294.8 Q884 294.8 884 296 V302 V298 Q884 297 885.2 297 Q886.5 297 886.5 298 V304 Q886.5 309 882 309 H879 Q877.5 309 876 307 Z" fill="#fff" stroke="#333" stroke-width="0.7"/>
 <circle cx="879.5" cy="323" r="4.8" fill="#fff" stroke="#333" stroke-width="0.9"/>
 <path d="M883 326.5 L887.5 331" stroke="#333" stroke-width="2"/>
 <path d="M879.5 338 L882.5 338 L881 340 Z" fill="#a8bcd4"/>
 <ellipse cx="881" cy="352" rx="8" ry="4" fill="none" stroke="#b0c4dc" stroke-width="1"/>
 <ellipse cx="881" cy="352" rx="3" ry="7" fill="none" stroke="#b0c4dc" stroke-width="1"/>
 <circle cx="880" cy="352" r="1.3" fill="#c04060"/>
 <path d="M879.5 367 L882.5 367 L881 369 Z" fill="#a8bcd4"/>
 <path d="M875 379 L881 376 L883 379" stroke="#333" stroke-width="0.7" fill="none"/>
 <rect x="874" y="380" width="14" height="8" fill="#f0e878" stroke="#333" stroke-width="0.8"/>
 <rect x="876.5" y="382.5" width="9" height="3" fill="#fff" stroke="#333" stroke-width="0.5"/>
 <circle cx="889" cy="403.5" r="3.3" fill="#dde6f0" stroke="#5a7090" stroke-width="0.6"/>
 <path d="M887.3 402.5 L889 404.7 L890.7 402.5" stroke="#456" stroke-width="0.8" fill="none"/></svg>
<div class="a" style="left:388px;top:468px;width:77px;height:15px;background:#fff;border:1px solid #a0b4c8"></div>
<div class="a" style="left:449px;top:469px;width:15px;height:13px;background:linear-gradient(#e4ecfa,#c4d4f0)"></div>
<svg class="a" style="left:452px;top:470px;" width="10" height="11" viewBox="0 0 10 11"><path d="M3 2 L7 5.5 L3 9" stroke="#1c3a78" stroke-width="1.7" fill="none"/></svg>
<div class="a" style="left:391px;top:470px;width:29px;height:11px;background:#1a3fa8"></div>
<div class="t" style="left:391.5px;top:470.93px;font-size:9.3px;color:#fff;">30 mm</div>
<div class="a" style="left:468px;top:464px;width:33px;height:20px;border:2px solid #1c1c1c;border-radius:10px;background:linear-gradient(#c8c8c4,#b0b0ac)"></div>
<svg class="a" style="left:477px;top:467px;" width="14" height="15" viewBox="0 0 14 15"><path d="M3.5 7 V4.5 Q3.5 1 7 1 Q10.5 1 10.5 4.5 V7" stroke="#444" stroke-width="1.4" fill="none"/><rect x="2" y="7" width="10" height="7" fill="#f4f0d8" stroke="#444" stroke-width="0.9"/><rect x="6.3" y="9" width="1.4" height="3" fill="#444"/></svg>
<svg class="a" style="left:6px;top:626px;" width="22" height="20" viewBox="0 0 22 20"><g fill="none" stroke="#d4d4d4" stroke-width="1.3"><rect x="2" y="2" width="17" height="16" rx="4" transform="rotate(10 10.5 10)"/><circle cx="8" cy="7.5" r="2.8"/><circle cx="13.5" cy="7.5" r="2.8"/><circle cx="8" cy="13" r="2.8"/><circle cx="13.5" cy="13" r="2.8"/></g></svg>
<div class="t" style="left:29.5px;top:626.34px;font-size:17px;color:rgba(222,222,222,0.78);font-weight:bold;">/mechanical_modeling</div>
<div class="a" style="left:36px;top:3px;width:422px;height:326px;background:#5872cc;border-radius:7px 7px 0 0"></div>
<div class="a" style="left:37px;top:3px;width:420px;height:24px;background:linear-gradient(#98acd0 0,#a8cafc 1.5px,#94b8f2 3.5px,#7ea2e8 10px,#7ea2e8 14px,#86aeee 19px,#8ab6f0 22.5px,#6a84c8 23.5px,#6a84c8 24px);border-radius:7px 7px 0 0"></div>
<div class="t" style="left:41.5px;top:9.59px;font-size:11.3px;color:#fff;font-weight:bold;text-shadow:0 0 1px #4a6ab0;">Hole</div>
<div class="a" style="left:435px;top:6px;width:19px;height:19px;border:1px solid #f4f0f4;border-radius:3px;background:linear-gradient(135deg,#e4a4b0,#c87484 55%,#b86a7a)"></div>
<svg class="a" style="left:435px;top:6px;" width="19" height="19" viewBox="0 0 19 19"><path d="M5 5 L14 14 M14 5 L5 14" stroke="#fff" stroke-width="2"/></svg>
<div class="a" style="left:39px;top:27px;width:416px;height:299px;background:#f1efe3;border-top:1px solid #fbfbf6;border-bottom:1px solid #fbfbf8"></div>
<svg width="0" height="0" style="position:absolute"><defs>
<pattern id="hatch" patternUnits="userSpaceOnUse" width="3.6" height="3.6" patternTransform="rotate(-45)"><rect width="3.6" height="3.6" fill="#bcdaf6"/><rect width="1" height="3.6" fill="#4070b0"/></pattern>
<pattern id="hatch2" patternUnits="userSpaceOnUse" width="4" height="4" patternTransform="rotate(-45)"><rect width="4" height="4" fill="#acd0f2"/><rect width="1.1" height="4" fill="#2a4a80"/></pattern>
<linearGradient id="drillg" x1="0" y1="0" x2="1" y2="0"><stop offset="0" stop-color="#4a80c8"/><stop offset="0.45" stop-color="#d8ecfc"/><stop offset="1" stop-color="#5a90d0"/></linearGradient>
</defs></svg>
<div class="grp" style="left:46px;top:46px;width:150px;height:166px"></div>
<div class="a" style="left:51px;top:41px;width:48px;height:10px;background:#f1efe3"></div>
<div class="t" style="left:53px;top:41.23px;font-size:9.2px;color:#182068;">Placement</div>
<div class="inp" style="left:54px;top:58px;width:137px;height:19px;border-color:#7a8a9a"><div class="spin" style="width:14px"></div></div>
<svg class="a" style="left:175px;top:62px;" width="12" height="10" viewBox="0 0 12 10"><path d="M2 3 L6 7 L10 3" stroke="#1c3a78" stroke-width="1.8" fill="none"/></svg>
<svg class="a" style="left:58px;top:61px;" width="14" height="13" viewBox="0 0 14 13"><path d="M1 1 V4 M1 1 H4 M1 12 V9 M1 12 H5 M12 6 V12 M8.5 12 H12 M11.5 6 H12.5 M5 1 H6" stroke="#222" stroke-width="1.1" fill="none"/><circle cx="6.5" cy="6" r="2.6" fill="#f4e4f4" stroke="#b040b0" stroke-width="1"/></svg>
<div class="t" style="left:74.2px;top:63.03px;font-size:9.3px;color:#000;">Linear</div>
<div class="btn" style="left:57px;top:94px;width:21px;height:21px;"><svg width="19" height="19" viewBox="0 0 19 19" style="position:absolute;left:0;top:0"><path d="M6 3.5 V15.5 L8.7 13 L10.6 17 L12.2 16.3 L10.4 12.3 L14 12.3 Z" fill="#fff" stroke="#222" stroke-width="0.9"/></svg></div>
<div class="t" style="left:82.1px;top:98.53px;font-size:9.3px;color:#000;">Face</div>
<div class="btn" style="left:57px;top:123px;width:21px;height:20px;border-color:#dcdacf;background:#f2f1ea"><svg width="19" height="19" viewBox="0 0 19 19" style="position:absolute;left:0;top:0"><path d="M6 3.5 V15.5 L8.7 13 L10.6 17 L12.2 16.3 L10.4 12.3 L14 12.3 Z" fill="#f8f8f4" stroke="#c8c8c0" stroke-width="0.9"/></svg></div>
<div class="t" style="left:82.1px;top:127.03px;font-size:9.3px;color:#000;">Solids</div>
<div class="btn" style="left:57px;top:151px;width:21px;height:21px;"><svg width="19" height="19" viewBox="0 0 19 19" style="position:absolute;left:0;top:0"><path d="M6 3.5 V15.5 L8.7 13 L10.6 17 L12.2 16.3 L10.4 12.3 L14 12.3 Z" fill="#fff" stroke="#222" stroke-width="0.9"/></svg></div>
<div class="btn" style="left:81px;top:151px;width:21px;height:21px;"><svg width="19" height="19" viewBox="0 0 19 19" style="position:absolute;left:0;top:0"><defs><linearGradient id="rfg" x1="0" y1="0" x2="1" y2="1"><stop offset="0" stop-color="#f8cc98"/><stop offset="0.5" stop-color="#f0a868"/><stop offset="1" stop-color="#f8d0a0"/></linearGradient></defs><path d="M3.3 2.8 L15.5 8.2 L15.5 16.7 L3.3 11.8 Z" fill="url(#rfg)" stroke="#6a4a2a" stroke-width="0.6"/><path d="M3.3 11.8 L15.5 16.7" stroke="#222" stroke-width="1" stroke-dasharray="1.2 0.8"/><path d="M4 15 L14 5" stroke="#111" stroke-width="1.6"/><path d="M2.2 16.8 L3 12.3 L6.8 16 Z" fill="#111"/><circle cx="15.3" cy="3.6" r="1.7" fill="#d81818"/></svg></div>
<div class="t" style="left:106.7px;top:157.73px;font-size:9.3px;color:#000;">Reference 1</div>
<div class="btn" style="left:57px;top:180px;width:21px;height:21px;"><svg width="19" height="19" viewBox="0 0 19 19" style="position:absolute;left:0;top:0"><path d="M6 3.5 V15.5 L8.7 13 L10.6 17 L12.2 16.3 L10.4 12.3 L14 12.3 Z" fill="#fff" stroke="#222" stroke-width="0.9"/></svg></div>
<div class="btn" style="left:81px;top:180px;width:21px;height:21px;"><svg width="19" height="19" viewBox="0 0 19 19" style="position:absolute;left:0;top:0"><defs><linearGradient id="rfg" x1="0" y1="0" x2="1" y2="1"><stop offset="0" stop-color="#f8cc98"/><stop offset="0.5" stop-color="#f0a868"/><stop offset="1" stop-color="#f8d0a0"/></linearGradient></defs><path d="M3.3 2.8 L15.5 8.2 L15.5 16.7 L3.3 11.8 Z" fill="url(#rfg)" stroke="#6a4a2a" stroke-width="0.6"/><path d="M3.3 11.8 L15.5 16.7" stroke="#222" stroke-width="1" stroke-dasharray="1.2 0.8"/><path d="M4 15 L14 5" stroke="#111" stroke-width="1.6"/><path d="M2.2 16.8 L3 12.3 L6.8 16 Z" fill="#111"/><circle cx="15.3" cy="3.6" r="1.7" fill="#d81818"/></svg></div>
<div class="t" style="left:106.7px;top:184.93px;font-size:9.3px;color:#000;">Reference 2</div>
<div class="grp" style="left:200px;top:46px;width:46px;height:166px"></div>
<div class="radio on" style="left:204px;top:65px"></div>
<div class="radio" style="left:204px;top:103px"></div>
<div class="radio" style="left:204px;top:140px"></div>
<div class="radio" style="left:204px;top:177px"></div>
<svg class="a" style="left:220px;top:59px;" width="24" height="25" viewBox="0 0 24 25"><rect x="0" y="2.5" width="24" height="22" fill="url(#hatch)"/><path d="M7.5 2.5 V18.5 L11.5 21.5 L15.5 18.5 V2.5 Z" fill="#fff"/><path d="M7.5 2.5 V18.5 L11.5 21.5 L15.5 18.5 V2.5" fill="none" stroke="#111" stroke-width="1.2"/><path d="M0 2.5 H7.5 M15.5 2.5 H24" stroke="#111" stroke-width="1.6"/><path d="M11.5 0 V25" stroke="#a01818" stroke-width="1" stroke-dasharray="4 1.5"/></svg>
<svg class="a" style="left:220px;top:95px;" width="24" height="25" viewBox="0 0 24 25"><rect x="0" y="2.5" width="24" height="22" fill="url(#hatch)"/><path d="M3.5 2.5 V7.5 H7.5 V18.5 L11.5 21.5 L15.5 18.5 V7.5 H19.5 V2.5 Z" fill="#fff"/><path d="M3.5 2.5 V7.5 H7.5 V18.5 L11.5 21.5 L15.5 18.5 V7.5 H19.5 V2.5" fill="none" stroke="#111" stroke-width="1.2"/><path d="M0 2.5 H3.5 M19.5 2.5 H24" stroke="#111" stroke-width="1.6"/><path d="M11.5 0 V25" stroke="#a01818" stroke-width="1" stroke-dasharray="4 1.5"/></svg>
<svg class="a" style="left:220px;top:132px;" width="24" height="25" viewBox="0 0 24 25"><rect x="0" y="2.5" width="24" height="22" fill="url(#hatch)"/><path d="M2.5 2.5 V5 H7.5 V18.5 L11.5 21.5 L15.5 18.5 V5 H20.5 V2.5 Z" fill="#fff"/><path d="M2.5 2.5 V5 H7.5 V18.5 L11.5 21.5 L15.5 18.5 V5 H20.5 V2.5" fill="none" stroke="#111" stroke-width="1.2"/><path d="M0 2.5 H2.5 M20.5 2.5 H24" stroke="#111" stroke-width="1.6"/><path d="M11.5 0 V25" stroke="#a01818" stroke-width="1" stroke-dasharray="4 1.5"/></svg>
<svg class="a" style="left:220px;top:170px;" width="24" height="25" viewBox="0 0 24 25"><rect x="0" y="2.5" width="24" height="22" fill="url(#hatch)"/><path d="M1.5 2.5 L7.5 9 V18.5 L11.5 21.5 L15.5 18.5 V9 L21.5 2.5 Z" fill="#fff"/><path d="M1.5 2.5 L7.5 9 V18.5 L11.5 21.5 L15.5 18.5 V9 L21.5 2.5" fill="none" stroke="#111" stroke-width="1.2"/><path d="M0 2.5 H1.5 M21.5 2.5 H24" stroke="#111" stroke-width="1.6"/><path d="M11.5 0 V25" stroke="#a01818" stroke-width="1" stroke-dasharray="4 1.5"/></svg>
<div class="grp" style="left:249px;top:46px;width:200px;height:166px"></div>
<svg class="a" style="left:268px;top:95px;" width="100" height="80" viewBox="0 0 100 80">
 <defs><linearGradient id="dfade" x1="0" y1="0" x2="0.6" y2="1"><stop offset="0" stop-color="#f1efe3" stop-opacity="0"/><stop offset="0.6" stop-color="#f1efe3" stop-opacity="0"/><stop offset="1" stop-color="#f1efe3" stop-opacity="0.6"/></linearGradient></defs>
 <path d="M7 4 L14 17 V53 L34 64 L54.5 61.5 V39.8 H63.8 V4 Z" fill="url(#hatch2)"/>
 <path d="M7 4 L14 17 V53 L34 64 L54.5 61.5 V39.8 H63.8 V4 Z" fill="url(#dfade)"/>
 <path d="M29.2 4 V50.7 L36.4 56.8 L43.5 50.7 V4 Z" fill="#fff"/>
 <path d="M29.2 4 V50.7 L36.4 56.8 L43.5 50.7 V4" fill="none" stroke="#111" stroke-width="1.2"/>
 <path d="M29.2 50.7 H43.5" stroke="#111" stroke-width="0.8"/>
 <path d="M54.5 61.5 V39.8 H63.8 V4" fill="none" stroke="#111" stroke-width="1.1"/>
 <path d="M4 4.1 H63.8 M66.5 4.1 H98 M43.5 50.7 H98" stroke="#111" stroke-width="1.3"/>
 <path d="M88.5 8 V47" stroke="#d01010" stroke-width="2"/>
 <path d="M84 12 L88.5 5 L93 12 Z M84 43 L88.5 50 L93 43 Z" fill="#d01010"/>
 <path d="M29.5 62 V75 M43 62 V75" stroke="#111" stroke-width="1.1"/>
 <path d="M16 69 H27 M46 69 H82" stroke="#d01010" stroke-width="2"/>
 <path d="M21.5 64.5 L29 69 L21.5 73.5 Z M43.5 69 L51 64.5 L51 73.5 Z" fill="#d01010"/></svg>
<div class="inp" style="left:350px;top:114px;width:86px;height:18px;border-color:#8ea4bc"><div class="spin"></div></div>
<svg class="a" style="left:423px;top:117px;" width="10" height="12" viewBox="0 0 10 12"><path d="M3 2 L7 6 L3 10" stroke="#1c3a78" stroke-width="1.8" fill="none"/></svg>
<div class="t" style="left:354.4px;top:118.43px;font-size:9.3px;color:#000;">8 mm</div>
<div class="inp" style="left:350px;top:156px;width:86px;height:18px;border-color:#8ea4bc"><div class="spin"></div></div>
<svg class="a" style="left:423px;top:159px;" width="10" height="12" viewBox="0 0 10 12"><path d="M3 2 L7 6 L3 10" stroke="#1c3a78" stroke-width="1.8" fill="none"/></svg>
<div class="t" style="left:354.4px;top:159.73px;font-size:9.3px;color:#000;">3 mm</div>
<div class="grp" style="left:46px;top:221px;width:200px;height:37px"></div>
<div class="a" style="left:51px;top:216px;width:43px;height:10px;background:#f1efe3"></div>
<div class="t" style="left:52.8px;top:215.63px;font-size:9.2px;color:#182068;">Drill Point</div>
<div class="radio" style="left:51px;top:237px"></div>
<div class="radio on" style="left:102px;top:237px"></div>
<svg class="a" style="left:67px;top:235px;" width="23" height="17" viewBox="0 0 23 17"><rect x="1" y="2" width="20" height="14" fill="url(#drillg)"/><path d="M1 2 V16 H21 V2" stroke="#111" stroke-width="1.4" fill="none"/><path d="M12 15 L15 3" stroke="#fff" stroke-width="0.8"/></svg>
<svg class="a" style="left:118px;top:235px;" width="23" height="19" viewBox="0 0 23 19"><path d="M1 2 V13 L11 18 L21 13 V2 Z" fill="url(#drillg)"/><path d="M1 2 V13 L11 18 L21 13 V2" stroke="#111" stroke-width="1.4" fill="none"/><path d="M12 15 L15 3" stroke="#fff" stroke-width="0.8"/></svg>
<div class="inp" style="left:154px;top:232px;width:79px;height:17px;border-color:#7a8a9a"><div class="spin"></div></div>
<svg class="a" style="left:220px;top:234px;" width="10" height="12" viewBox="0 0 10 12"><path d="M3 2 L7 6 L3 10" stroke="#1c3a78" stroke-width="1.8" fill="none"/></svg>
<div class="t" style="left:159px;top:235.63px;font-size:9.3px;color:#000;">118 deg</div>
<div class="grp" style="left:249px;top:221px;width:200px;height:37px"></div>
<div class="a" style="left:254px;top:216px;width:53px;height:10px;background:#f1efe3"></div>
<div class="t" style="left:256.6px;top:214.93px;font-size:9.2px;color:#182068;">Termination</div>
<div class="inp" style="left:256px;top:234px;width:90px;height:18px;border-color:#7a8a9a"><div class="spin" style="width:14px"></div></div>
<svg class="a" style="left:330px;top:237px;" width="12" height="10" viewBox="0 0 12 10"><path d="M2 3 L6 7 L10 3" stroke="#1c3a78" stroke-width="1.8" fill="none"/></svg>
<div class="t" style="left:259.6px;top:238.13px;font-size:9.3px;color:#000;">Distance</div>
<div class="btn" style="left:352px;top:233px;width:21px;height:21px;"><svg width="19" height="19" viewBox="0 0 19 19" style="position:absolute;left:0;top:0"><defs><linearGradient id="rfg" x1="0" y1="0" x2="1" y2="1"><stop offset="0" stop-color="#f8cc98"/><stop offset="0.5" stop-color="#f0a868"/><stop offset="1" stop-color="#f8d0a0"/></linearGradient></defs><path d="M3.3 2.8 L15.5 8.2 L15.5 16.7 L3.3 11.8 Z" fill="url(#rfg)" stroke="#6a4a2a" stroke-width="0.6"/><path d="M3.3 11.8 L15.5 16.7" stroke="#222" stroke-width="1" stroke-dasharray="1.2 0.8"/><path d="M4 15 L14 5" stroke="#111" stroke-width="1.6"/><path d="M2.2 16.8 L3 12.3 L6.8 16 Z" fill="#111"/><circle cx="15.3" cy="3.6" r="1.7" fill="#d81818"/></svg></div>
<div class="radio on" style="left:51px;top:275px"></div>
<div class="radio" style="left:104px;top:275px"></div>
<div class="radio" style="left:156px;top:275px"></div>
<div class="radio" style="left:208px;top:275px"></div>
<svg class="a" style="left:65px;top:271px;" width="25" height="22" viewBox="0 0 25 22"><rect x="1" y="0" width="6" height="22" fill="url(#hatch)"/><rect x="18" y="0" width="6" height="22" fill="url(#hatch)"/><path d="M7 0 V22 M18 0 V22" stroke="#111" stroke-width="1"/><path d="M12.5 0 V22" stroke="#c02020" stroke-dasharray="2.5 1.5" stroke-width="0.9"/></svg>
<svg class="a" style="left:118px;top:271px;" width="25" height="22" viewBox="0 0 25 22"><rect x="1" y="0" width="6" height="22" fill="url(#hatch)"/><rect x="18" y="0" width="6" height="22" fill="url(#hatch)"/><path d="M7 0 V22 M18 0 V22" stroke="#111" stroke-width="1"/><path d="M9 0 V16 Q12.5 20 16 16 V0" stroke="#111" fill="#e8e8e8" stroke-width="1"/><path d="M12.5 0 V22" stroke="#c02020" stroke-dasharray="2.5 1.5" stroke-width="0.9"/></svg>
<svg class="a" style="left:171px;top:271px;" width="25" height="22" viewBox="0 0 25 22"><rect x="1" y="0" width="7" height="22" fill="url(#hatch)"/><rect x="17" y="0" width="7" height="22" fill="url(#hatch)"/><path d="M8 0 V22 M17 0 V22" stroke="#111" stroke-width="1.2"/><path d="M8 5 H17 M8 11 H17 M8 17 H17" stroke="#111" stroke-width="0.9"/><path d="M12.5 0 V22" stroke="#c02020" stroke-width="0.9"/><path d="M10 3 H15 M10 9 H15 M10 14 H15 M10 20 H15" stroke="#c02020" stroke-width="0.8"/></svg>
<svg class="a" style="left:223px;top:271px;" width="25" height="22" viewBox="0 0 25 22"><path d="M0 0 H6 L9 22 H0 Z M25 0 H19 L16 22 H25 Z" fill="url(#hatch)"/><path d="M3 1 H22 M6 0 L9 22 M19 0 L16 22" stroke="#111" stroke-width="1.1"/><path d="M7 7 H18" stroke="#111" stroke-width="0.8"/><path d="M12.5 0 V22" stroke="#c02020" stroke-width="0.9" stroke-dasharray="2.5 1.5"/><path d="M10 4 H15 M10 10 H15" stroke="#c02020" stroke-width="0.8"/></svg>
<div class="a" style="left:395px;top:272px;width:12px;height:12px;border:1px solid #1c5180;background:linear-gradient(135deg,#dcdcd6,#fff)"></div>
<svg class="a" style="left:415px;top:270px;" width="17" height="17" viewBox="0 0 17 17"><circle cx="8.5" cy="8.5" r="7" fill="#b8d0f0" stroke="#1a2a50" stroke-width="1.2"/><path d="M4 4 L13 13" stroke="#c02020" stroke-width="1.8"/><path d="M3 6 A6 6 0 0 1 6 3" stroke="#fff" stroke-width="1.2" fill="none"/></svg>
<div class="a" style="left:46px;top:297px;width:20px;height:19px;border:1px solid #8a8a80;border-radius:3px;background:#f4f3ee"></div>
<svg class="a" style="left:49px;top:299px;" width="15" height="15" viewBox="0 0 15 15"><path d="M1.5 1.5 H13.5 V11.5 H9 L7.5 14 L6.5 11.5 H1.5 Z" fill="#fffff0" stroke="#111" stroke-width="1.2"/><text x="4.2" y="10.5" font-family="Liberation Sans" font-weight="bold" font-size="10" fill="#111">?</text></svg>
<div class="grp" style="left:179px;top:296px;width:54px;height:22px;border-color:#dedac8"></div>
<div class="a" style="left:183px;top:302px;width:12px;height:12px;border:1px solid #1a1a1a;background:linear-gradient(135deg,#e8e8e0,#fff)"></div>
<svg class="a" style="left:184px;top:303px;" width="10" height="10" viewBox="0 0 10 10"><path d="M2 5 L4 7.5 L8.5 2.5" stroke="#1a8a1a" stroke-width="2" fill="none"/></svg>
<svg class="a" style="left:199px;top:300px;" width="27" height="14" viewBox="0 0 27 14"><path d="M1 5 H10 V11 Q10 13 8 13 H3 Q1 13 1 11 Z M13 5 H22 V11 Q22 13 20 13 H15 Q13 13 13 11 Z" fill="#fff" stroke="#222" stroke-width="1"/><path d="M10 7 Q11.5 5.5 13 7 M22 5 L26 1 M1 5 L3 1" stroke="#222" stroke-width="1" fill="none"/></svg>
<div class="a" style="left:239px;top:297px;width:66px;height:19px;border:1px solid #1a2a44;border-radius:3px;background:linear-gradient(#fff,#f4f4f0 70%,#d8d4c8)"></div>
<div class="t" style="left:265.7px;top:301.63px;font-size:9.3px;color:#000;">OK</div>
<div class="a" style="left:311px;top:297px;width:66px;height:19px;border:1px solid #1a2a44;border-radius:3px;background:linear-gradient(#fff,#f4f4f0 70%,#d8d4c8)"></div>
<div class="t" style="left:329.2px;top:301.63px;font-size:9.3px;color:#000;">Cancel</div>
<div class="a" style="left:382px;top:297px;width:66px;height:19px;border:1px solid #1a2a44;border-radius:3px;background:linear-gradient(#fff,#f4f4f0 70%,#d8d4c8);box-shadow:inset 0 0 0 1px #f8d890,inset 0 -2px 0 1px #e8b040"></div>
<div class="t" style="left:402.6px;top:301.63px;font-size:9.3px;color:#000;">Apply</div>
<svg class="a" style="left:412px;top:315px;" width="14" height="20" viewBox="0 0 14 20"><path d="M1 1 V15 L4.5 12 L7 18 L9 17 L6.6 11.5 L11 11.5 Z" fill="#fff" stroke="#111" stroke-width="1"/></svg>
</body></html>
